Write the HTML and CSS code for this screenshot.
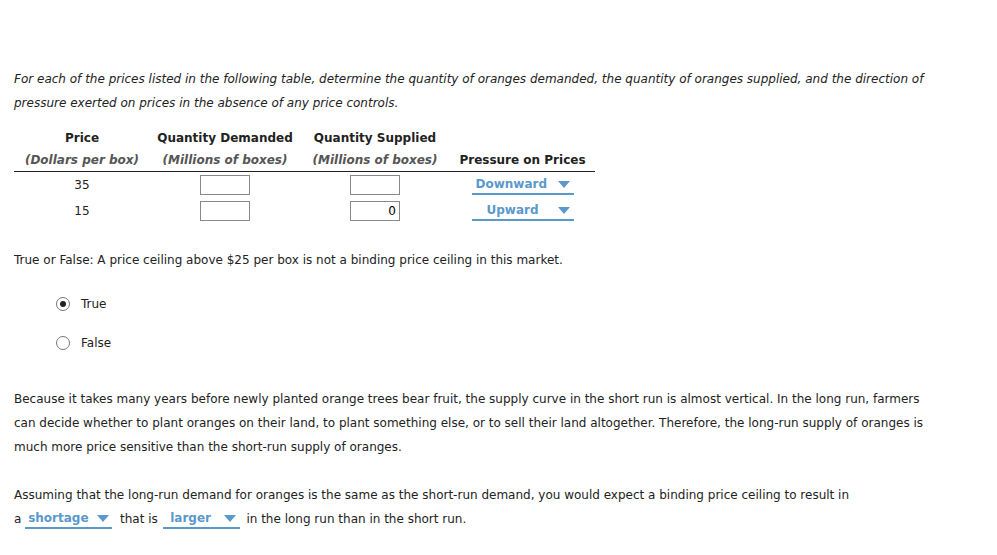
FILE: index.html
```html
<!DOCTYPE html>
<html lang="en">
<head>
  <meta charset="UTF-8" />
  <title>Price Ceilings - Oranges</title>
  <link rel="stylesheet" href="styles.css">
</head>
<body>

  <div class="question">
    <p class="intro">For each of the prices listed in the following table, determine the quantity of oranges demanded, the quantity of oranges supplied, and the direction of<br>
      pressure exerted on prices in the absence of any price controls.</p>

    <table class="market">
      <thead>
        <tr>
          <th class="col-price">Price</th>
          <th class="col-qty">Quantity Demanded</th>
          <th class="col-qty">Quantity Supplied</th>
          <th class="col-pressure"></th>
        </tr>
        <tr class="units">
          <th>(Dollars per box)</th>
          <th>(Millions of boxes)</th>
          <th>(Millions of boxes)</th>
          <th class="plain">Pressure on Prices</th>
        </tr>
      </thead>
      <tbody>
        <tr>
          <td>35</td>
          <td><input type="text" class="qty-box" /></td>
          <td><input type="text" class="qty-box" /></td>
          <td>
            <span class="dropdown wide"><span class="choice">Downward</span><span class="caret"></span></span>
          </td>
        </tr>
        <tr>
          <td>15</td>
          <td><input type="text" class="qty-box" /></td>
          <td><input type="text" class="qty-box" value="0" /></td>
          <td>
            <span class="dropdown wide center"><span class="choice">Upward</span><span class="caret"></span></span>
          </td>
        </tr>
      </tbody>
    </table>

    <p class="statement">True or False: A price ceiling above $25 per box is not a binding price ceiling in this market.</p>

    <div class="options">
      <label class="option"><span class="radio checked"></span>True</label>
      <label class="option"><span class="radio"></span>False</label>
    </div>

    <p class="para">Because it takes many years before newly planted orange trees bear fruit, the supply curve in the short run is almost vertical. In the long run, farmers<br>
      can decide whether to plant oranges on their land, to plant something else, or to sell their land altogether. Therefore, the long-run supply of oranges is<br>
      much more price sensitive than the short-run supply of oranges.</p>

    <p class="para last">Assuming that the long-run demand for oranges is the same as the short-run demand, you would expect a binding price ceiling to result in<br>
      a <span class="dropdown inline"><span class="choice">shortage</span><span class="caret"></span></span> that is <span class="dropdown inline short"><span class="choice">larger</span><span class="caret"></span></span> in the long run than in the short run.</p>
  </div>

</body>
</html>
```

FILE: styles.css
```css
body {
  margin: 0;
  font-family: 'DejaVu Sans', Verdana, sans-serif;
  font-size: 12px;
  color: #222;
  background: #fff;
}

.question {
  padding: 67px 14px 0 14px;
}

p {
  margin: 0;
  line-height: 24px;
  white-space: nowrap;
}

.intro {
  font-style: italic;
}

/* table */

.market {
  border-collapse: collapse;
  margin-top: 12px;
  width: 581px;
}

.market th {
  font-weight: bold;
  padding: 0;
  height: 22px;
  text-align: center;
  vertical-align: middle;
}

.market .units th {
  font-style: italic;
  color: #555;
}

.market .units th.plain {
  font-style: normal;
  color: #222;
}

.market thead tr.units {
  border-bottom: 1.5px solid #222;
}

.col-price { width: 136px; }
.col-qty { width: 150px; }

.market td {
  text-align: center;
  height: 26px;
  padding: 0;
}

.qty-box {
  width: 50px;
  height: 20px;
  box-sizing: border-box;
  border: 1px solid #888;
  font-family: inherit;
  font-size: 12px;
  text-align: right;
  padding: 0 3px;
  vertical-align: middle;
}

/* dropdowns */

.dropdown {
  display: inline-flex;
  align-items: center;
  justify-content: space-between;
  border-bottom: 2px solid #5b98cc;
  color: #5b98cc;
  font-weight: bold;
  padding: 0 4px 0 4px;
  line-height: 17px;
  box-sizing: border-box;
  vertical-align: middle;
}

.dropdown.wide {
  width: 102px;
}

.dropdown.center .choice {
  flex: 1;
  text-align: center;
}

.caret {
  width: 0;
  height: 0;
  border-left: 6.5px solid transparent;
  border-right: 6.5px solid transparent;
  border-top: 7px solid #5b98cc;
  margin-left: 8px;
}

.dropdown.inline {
  width: 87px;
  padding: 0 4px 0 3px;
  margin-right: 4px;
}

.dropdown.inline.short {
  width: 77px;
  margin-left: 1px;
  margin-right: 3px;
}

.dropdown.short .choice {
  flex: 1;
  text-align: center;
}

/* true / false */

.statement {
  margin-top: 24px;
}

.options {
  padding-left: 42px;
  margin-top: 12px;
}

.option {
  display: flex;
  align-items: center;
  height: 39px;
  gap: 11px;
}

.radio {
  width: 12px;
  height: 12px;
  border: 1px solid #777;
  border-radius: 50%;
  display: inline-flex;
  align-items: center;
  justify-content: center;
}

.radio.checked::after {
  content: "";
  width: 6px;
  height: 6px;
  border-radius: 50%;
  background: #222;
}

.para {
  margin-top: 25px;
}

.para.last {
  margin-top: 24px;
}
```
